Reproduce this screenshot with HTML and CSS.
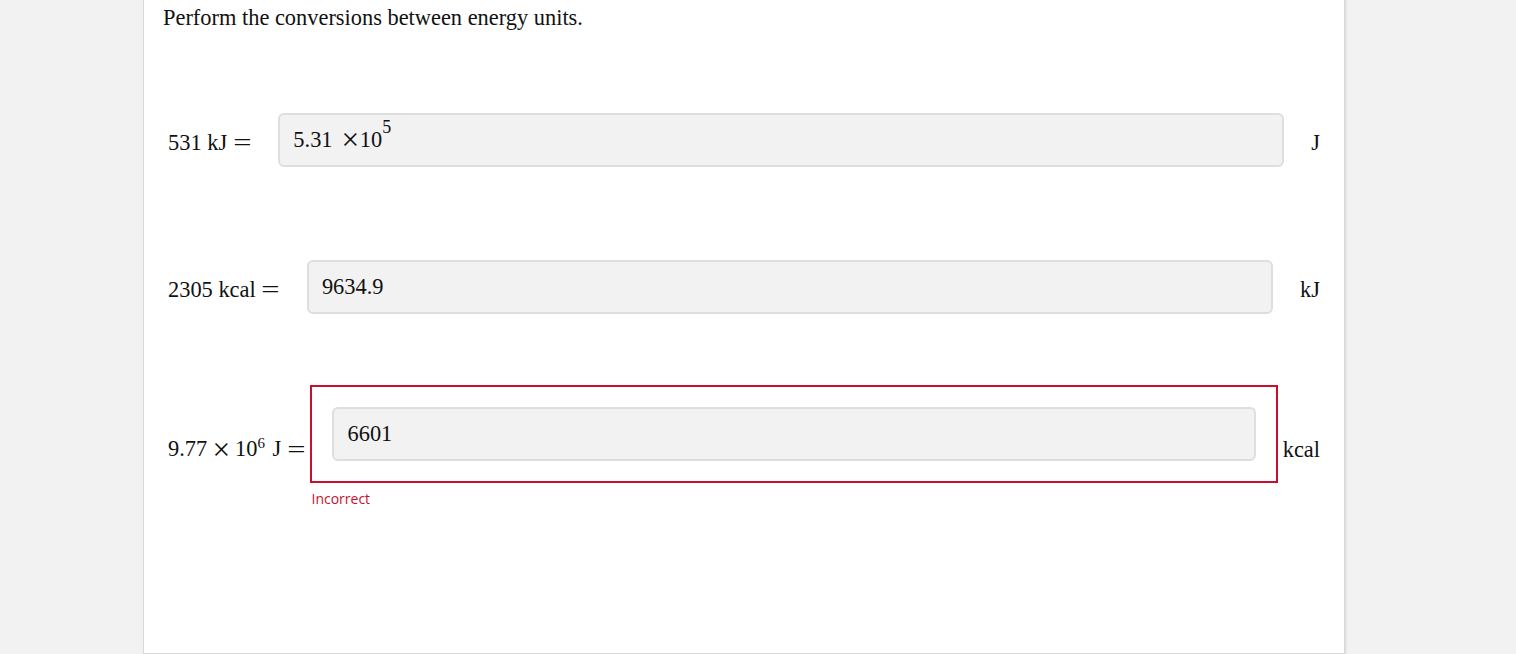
FILE: index.html
```html
<!DOCTYPE html>
<html lang="en">
<head>
    <meta charset="UTF-8">
    <title>Energy Unit Conversions</title>
    <link rel="stylesheet" href="styles.css">
</head>
<body>
    <div class="card">
        <p class="prompt">Perform the conversions between energy units.</p>

        <div class="questions">
            <div class="row">
                <div class="label">531 kJ <span class="eq">=</span></div>
                <div class="cell">
                    <div class="field">
                        <div class="answer">5.31 <span class="times">&times;</span>10<sup class="exp">5</sup></div>
                    </div>
                </div>
                <div class="unit">J</div>
            </div>

            <div class="row">
                <div class="label">2305 kcal <span class="eq">=</span></div>
                <div class="cell">
                    <div class="field">
                        <div class="answer">9634.9</div>
                    </div>
                </div>
                <div class="unit">kJ</div>
            </div>

            <div class="row">
                <div class="label">9.77 <span class="times">&times;</span> 10<sup class="pow">6</sup> J <span class="eq">=</span></div>
                <div class="cell">
                    <div class="field incorrect">
                        <div class="answer">6601</div>
                    </div>
                    <div class="feedback">Incorrect</div>
                </div>
                <div class="unit">kcal</div>
            </div>
        </div>
    </div>
</body>
</html>
```

FILE: styles.css
```css
body {
    margin: 0;
    background-color: #f2f2f2;
    font-family: "Liberation Serif", "Times New Roman", serif;
    color: #111;
}

.card {
    width: 1202px;
    height: 654px;
    margin-left: 143px;
    padding: 5px 19px 0;
    box-sizing: border-box;
    background-color: #fff;
    border: 1px solid #d9d9d9;
    border-top: none;
    box-shadow: 1px 0 2px rgba(0, 0, 0, 0.12);
}

.prompt {
    margin: 0;
    font-size: 22.4px;
}

.questions {
    margin-top: 60px;
    padding: 0 5px;
}

.row {
    display: flex;
    align-items: center;
    margin-bottom: 49px;
    font-size: 22.4px;
}

.label,
.unit {
    padding-top: 6px;
    white-space: nowrap;
}

.cell {
    flex: 1;
    display: flex;
    flex-direction: column;
}

.field {
    margin: 0 5px;
    padding: 20px;
    border: 2px solid transparent;
}

.field.incorrect {
    border-color: #c8102e;
}

.answer {
    height: 54px;
    padding: 0 13px;
    box-sizing: border-box;
    display: flex;
    align-items: center;
    background-color: #f2f2f2;
    border: 2px solid #dedede;
    border-radius: 6px;
    white-space: pre;
}

.eq {
    display: inline-block;
    margin: 0 3px;
    transform: scaleX(1.45);
}

.times {
    display: inline-block;
    margin: 0 2px;
    transform: scale(1.4);
}

.answer .times {
    margin: 0 3px 0 6px;
}

.exp {
    font-size: 18px;
    align-self: flex-start;
    margin-top: 3px;
    line-height: 1;
}

.pow {
    font-size: 15px;
    line-height: 1;
    margin-right: 2px;
}

.feedback {
    margin: 6px 0 0 6px;
    font-family: "Open Sans", "Liberation Sans", sans-serif;
    font-size: 14px;
    line-height: 19px;
    color: #c8102e;
}
```
